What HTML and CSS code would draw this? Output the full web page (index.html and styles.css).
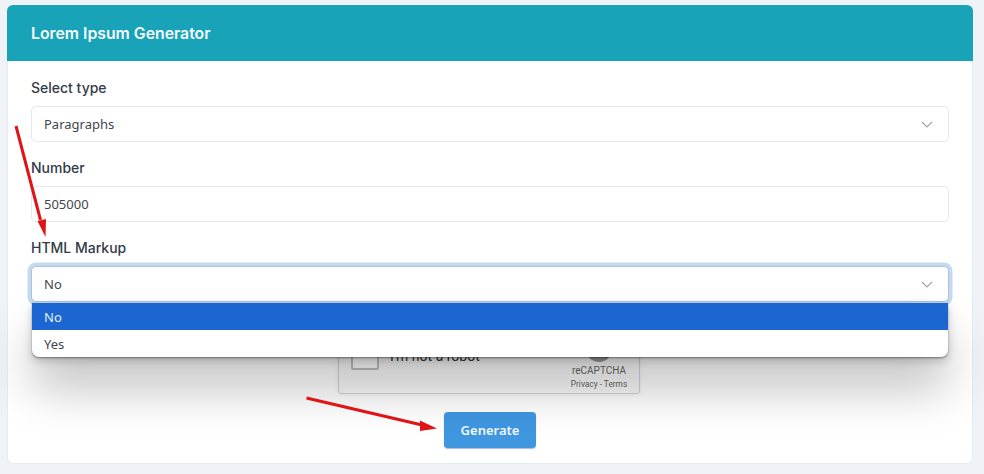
FILE: index.html
```html
<!DOCTYPE html>
<html lang="en">
<head>
<meta charset="utf-8">
<title>Lorem Ipsum Generator</title>
<link rel="stylesheet" href="styles.css">
</head>
<body>
<main class="card">
  <header class="card-header"><h1 class="card-title">Lorem Ipsum Generator</h1></header>
  <form class="card-body">
    <div class="field">
      <div class="label">Select type</div>
      <div class="control">Paragraphs
        <svg class="chevron" viewBox="0 0 12 7" width="12" height="7"><path d="M1 1l5 5 5-5" fill="none" stroke="#a0a5ab" stroke-width="1.2"/></svg>
      </div>
    </div>
    <div class="field">
      <div class="label">Number</div>
      <div class="control">505000</div>
    </div>
    <div class="field field-open">
      <div class="label">HTML Markup</div>
      <div class="control control-focus">No
        <svg class="chevron" viewBox="0 0 12 7" width="12" height="7"><path d="M1 1l5 5 5-5" fill="none" stroke="#a0a5ab" stroke-width="1.2"/></svg>
      </div>
      <ul class="menu">
        <li class="option option-active">No</li>
        <li class="option">Yes</li>
      </ul>
    </div>
    <div class="captcha">
      <span class="captcha-box"></span>
      <span class="captcha-text">I'm not a robot</span>
      <div class="captcha-brand">
        <span class="captcha-logo"></span>
        <span class="captcha-name">reCAPTCHA</span>
        <span class="captcha-links">Privacy - Terms</span>
      </div>
    </div>
    <div class="actions"><button class="btn" type="button">Generate</button></div>
  </form>
</main>
<svg class="annotations" width="984" height="474" viewBox="0 0 984 474">
  <path d="M16 126L40.500 220" stroke="#e01414" stroke-width="3" fill="none"/>
  <path d="M45.500 237L37.500 221L46 219Z" fill="#e01414"/>
  <path d="M306.500 398L422 425" stroke="#e01414" stroke-width="3" fill="none"/>
  <path d="M437 428.500L420 420.500L420 431Z" fill="#e01414"/>
</svg>
</body>
</html>
```
FILE: styles.css
```css
* { box-sizing: border-box; }
html, body { height: 100%; }
body {
  margin: 0;
  padding: 5px 11px 10px 7px;
  background: #eff3f8;
  font-family: "Inter", "Liberation Sans", sans-serif;
  color: #2b3340;
  overflow: hidden;
  position: relative;
}
.card {
  background: #fff;
  border-radius: 6px;
  border: 1px solid #e6ebf1;
  border-top: 0;
  height: 459px;
  display: flex;
  flex-direction: column;
}
.card-header {
  height: 56px;
  background: #19a3b8;
  border-radius: 6px 6px 0 0;
  margin: 0 -1px;
  padding: 2px 24px 0;
  display: flex;
  align-items: center;
}
.card-title {
  margin: 0;
  font-size: 15.800px;
  line-height: 20px;
  font-weight: 600;
  color: #f4fbfc;
}
.card-body {
  padding: 17px 23px 0;
  display: flex;
  flex-direction: column;
  gap: 16px;
}
.field { position: relative; }
.label {
  font-size: 14px;
  line-height: 20px;
  font-weight: 450;
  margin-bottom: 8px;
  color: #333b49;
}
.control {
  height: 36px;
  border: 1px solid #e5e8ec;
  border-radius: 5px;
  background: #fff;
  padding: 0 12px;
  font-family: "Noto Sans", "Liberation Sans", sans-serif;
  font-size: 13px;
  line-height: 34px;
  color: #3f464e;
  position: relative;
}
.control-focus {
  border-color: #a7c4e4;
  box-shadow: 0 0 0 3.500px #c6d9ed;
}
.chevron {
  position: absolute;
  right: 15px;
  top: 14px;
}
.menu {
  position: absolute;
  left: 1px;
  right: 1px;
  top: 65px;
  margin: 0;
  padding: 0;
  list-style: none;
  background: #fff;
  border-radius: 0 0 7px 7px;
  overflow: hidden;
  z-index: 2;
  box-shadow: 0 1px 2px rgba(0,0,0,.4), 0 4px 10px rgba(0,0,0,.2), 0 32px 48px rgba(0,0,0,.24);
}
.field-open { z-index: 2; }
.option {
  height: 27px;
  line-height: 27px;
  padding: 1px 12px 0;
  font-family: "Noto Sans", "Liberation Sans", sans-serif;
  font-size: 13px;
  color: #3f464e;
}
.option-active {
  background: #1b66d0;
  color: #e9f1fb;
}
.captcha {
  width: 302px;
  height: 78px;
  margin: -2px 0 0 307px;
  background: #f9f9f9;
  border: 1px solid #d3d3d3;
  border-radius: 3px;
  box-shadow: 0 0 4px rgba(0,0,0,.08);
  display: flex;
  align-items: center;
  padding: 0 11px 0 12px;
  font-family: "Roboto", "Liberation Sans", sans-serif;
  color: #555;
}
.captcha-box {
  width: 28px;
  height: 28px;
  background: #fff;
  border: 2px solid #c1c1c1;
  border-radius: 2px;
  margin-top: 2px;
}
.captcha-text {
  margin: 2px 0 0 11px;
  font-size: 14px;
  color: #333;
  flex: 1;
}
.captcha-brand {
  display: flex;
  flex-direction: column;
  align-items: center;
  width: 58px;
  margin-top: 16px;
}
.captcha-logo {
  width: 26px;
  height: 26px;
  border-radius: 50%;
  background: #9a9a9a;
  margin-bottom: 2px;
}
.captcha-name {
  font-size: 10px;
  line-height: 14px;
  color: #666;
}
.captcha-links {
  font-size: 8.300px;
  line-height: 12px;
  color: #666;
  white-space: nowrap;
}
.actions {
  display: flex;
  justify-content: center;
  margin-top: 2px;
}
.btn {
  width: 92px;
  height: 36px;
  border: 0;
  border-radius: 4px;
  background: #3f97e0;
  color: #f2f8fd;
  font-family: "Noto Sans", "Liberation Sans", sans-serif;
  font-size: 13px;
  font-weight: 600;
  box-shadow: 0 1px 1px rgba(30,90,150,.4);
}
.annotations {
  position: absolute;
  left: 0;
  top: 0;
  z-index: 5;
  pointer-events: none;
}
```
